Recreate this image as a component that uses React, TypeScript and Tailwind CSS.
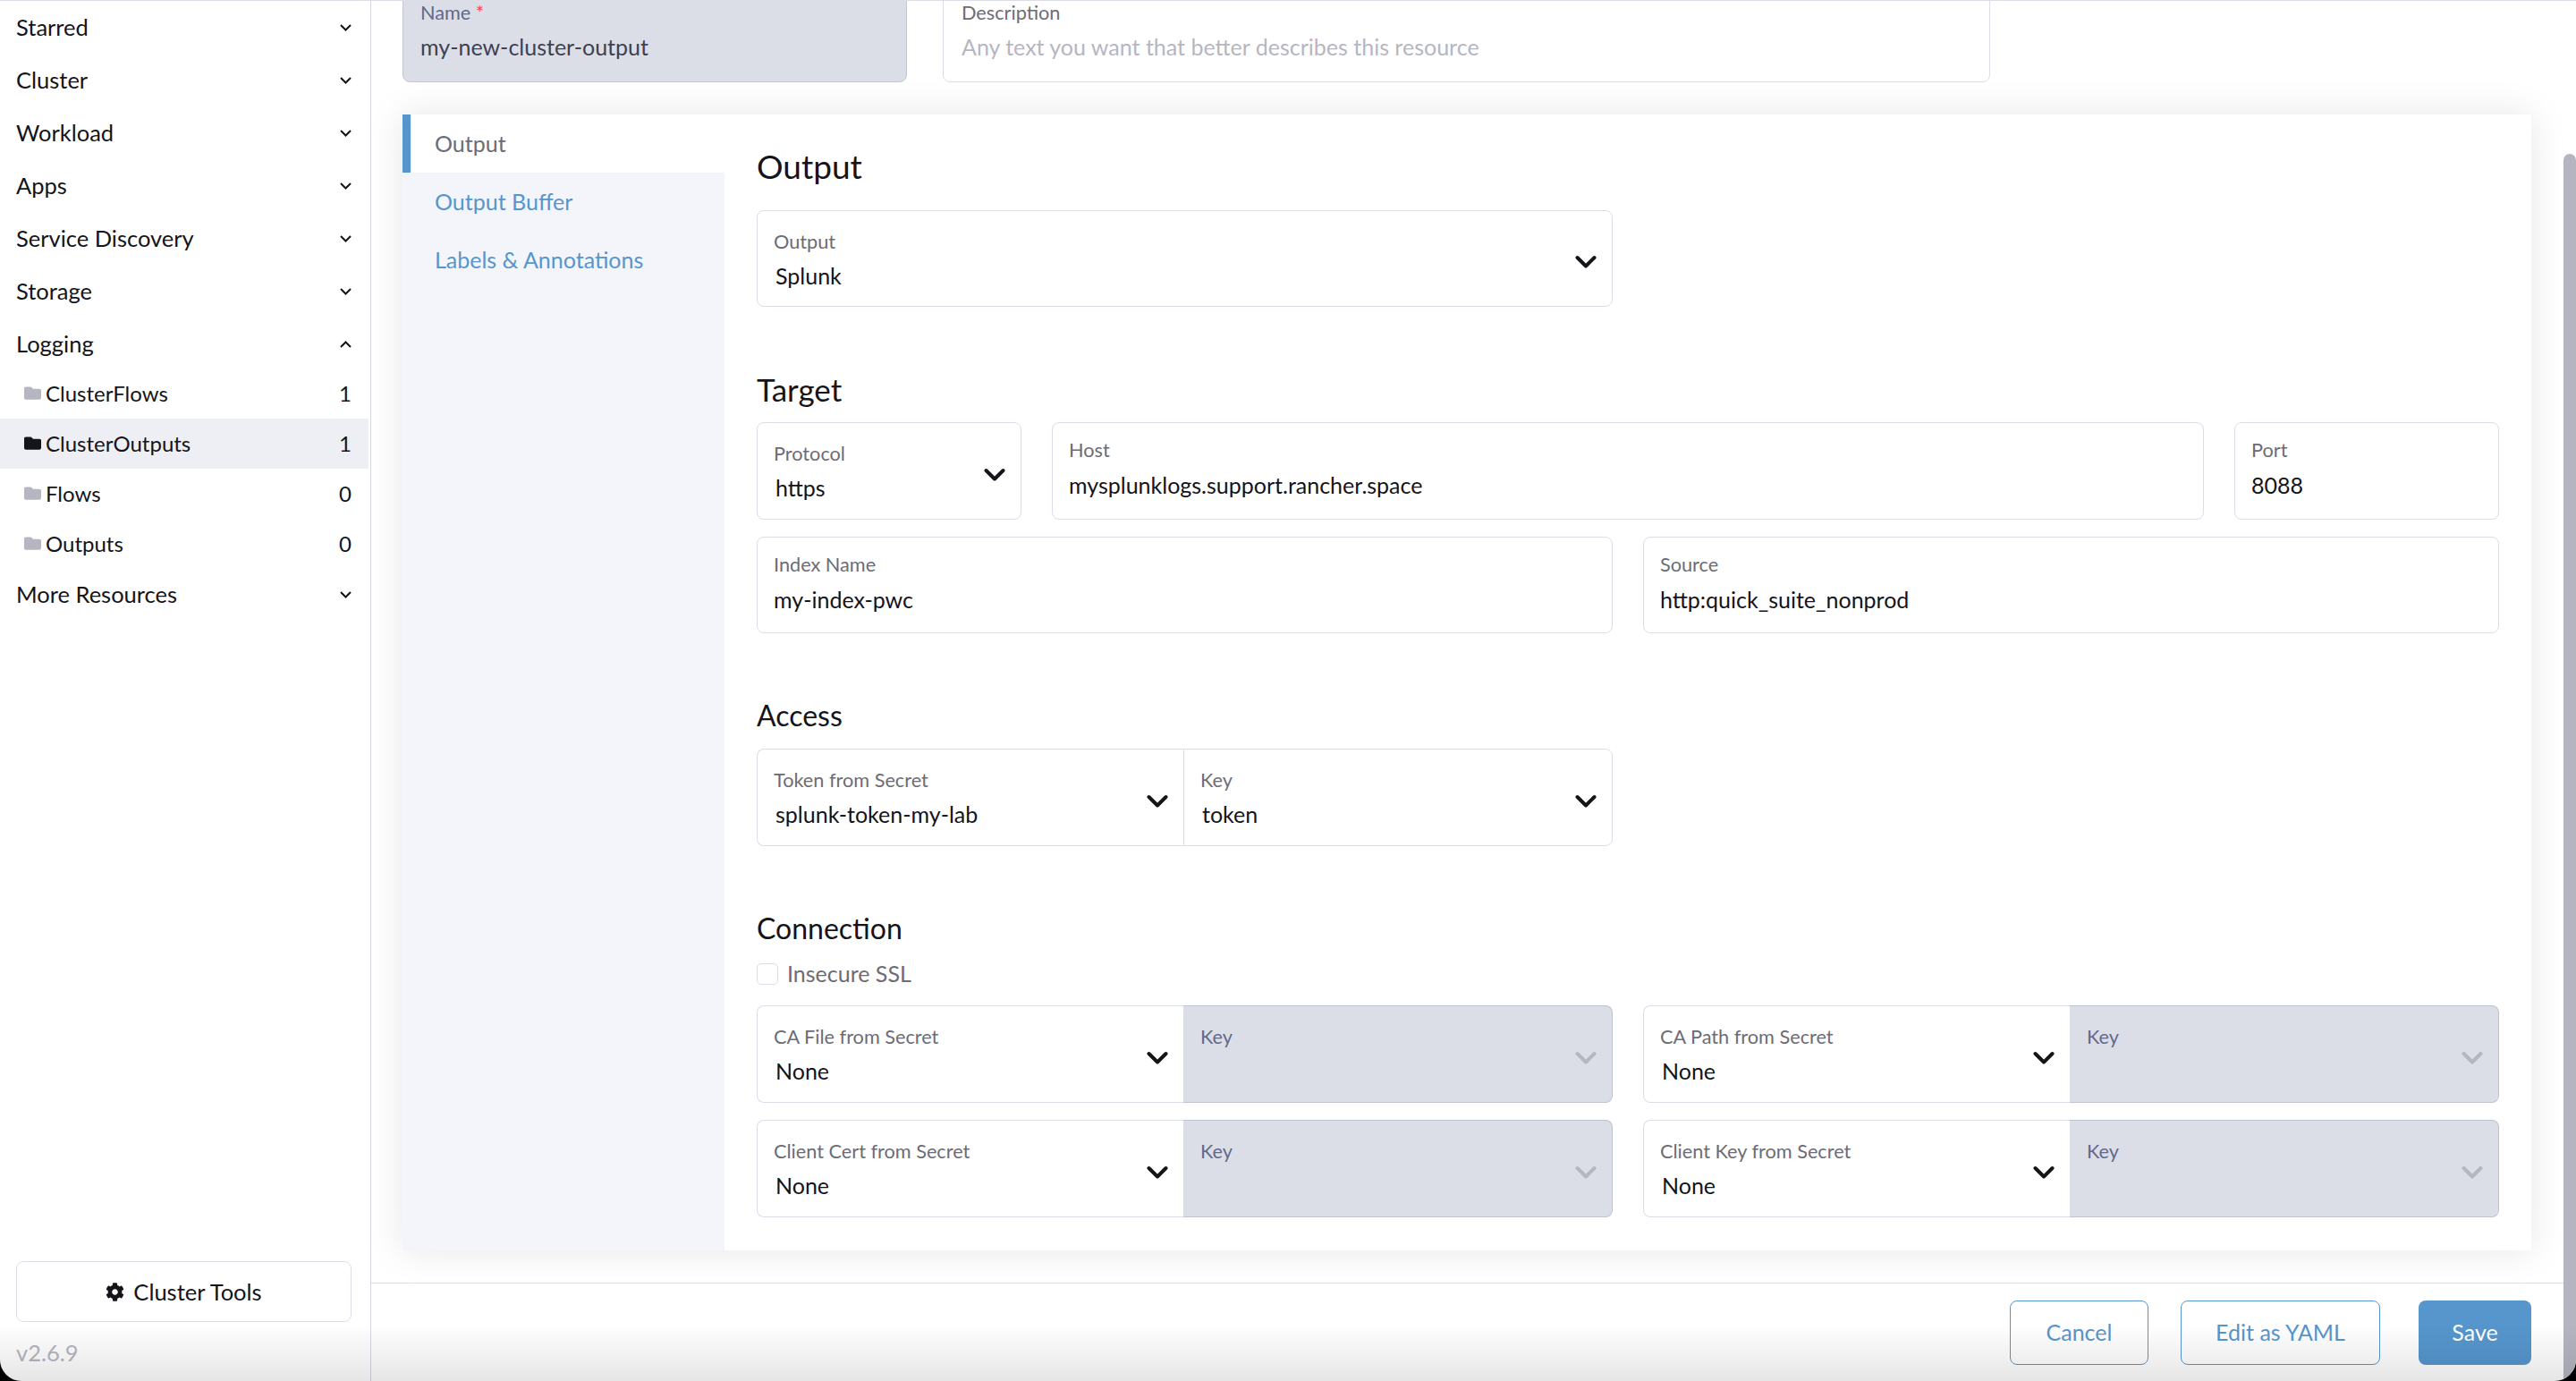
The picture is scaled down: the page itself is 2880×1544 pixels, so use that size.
import { FaCog, FaFolder } from 'react-icons/fa';

const navTop = ['Starred', 'Cluster', 'Workload', 'Apps', 'Service Discovery', 'Storage'];
const logging = [
  { name: 'ClusterFlows', count: 1 },
  { name: 'ClusterOutputs', count: 1, active: true },
  { name: 'Flows', count: 0 },
  { name: 'Outputs', count: 0 },
];

function SmallChevron({ up }: { up?: boolean }) {
  return (
    <svg width="13" height="8" viewBox="0 0 13 8" fill="none" stroke="#141419" strokeWidth="2" className={up ? 'rotate-180' : ''}>
      <path d="M1 1l5.5 5.5L12 1" />
    </svg>
  );
}

function SelectChevron({ disabled }: { disabled?: boolean }) {
  return (
    <svg width="24" height="15" viewBox="0 0 24 15" fill="none" stroke={disabled ? '#b6b6c2' : '#141419'} strokeWidth="4" strokeLinecap="round" strokeLinejoin="round" className="mt-[7px] shrink-0">
      <path d="M2.5 3L12 12.5 21.5 3" />
    </svg>
  );
}

function NavRow({ label, up }: { label: string; up?: boolean }) {
  return (
    <div className="flex h-[59px] items-center justify-between pb-[2px] pl-[18px] pr-[21px] text-[25.5px] text-[#141419]">
      <span>{label}</span>
      <SmallChevron up={up} />
    </div>
  );
}

function Sidebar() {
  return (
    <aside className="flex w-[415px] shrink-0 flex-col border-r border-[#d5d6de] pt-px">
      {navTop.map((label) => (
        <NavRow key={label} label={label} />
      ))}
      <NavRow label="Logging" up />
      <div className="-mt-[3px]">
        {logging.map((item) => (
          <div
            key={item.name}
            className={`mr-[2px] flex h-[56px] items-center justify-between pb-px pl-[27px] pr-[19px] text-[24px] text-[#141419] ${item.active ? 'bg-[#eeeff4]' : ''}`}
          >
            <span className="flex items-center gap-[5px]">
              <FaFolder size={19} color={item.active ? '#141419' : '#b6b6c2'} />
              {item.name}
            </span>
            <span>{item.count}</span>
          </div>
        ))}
      </div>
      <NavRow label="More Resources" />
      <div className="mt-auto pb-[16px] pl-[18px] pr-[21px]">
        <button className="flex h-[68px] w-full items-center justify-center gap-[10px] rounded-[8px] border border-[#dcdee7] text-[25.5px] text-[#141419]">
          <FaCog size={21} />
          Cluster Tools
        </button>
        <div className="mt-[18px] text-[25.5px] leading-[32px] text-[#b6b6c2]">v2.6.9</div>
      </div>
    </aside>
  );
}

function Label({ children, disabled }: { children: React.ReactNode; disabled?: boolean }) {
  return <div className={`text-[21.7px] leading-[30px] ${disabled ? 'text-[#64688a]' : 'text-[#6c6c76]'}`}>{children}</div>;
}

function InputField({ label, value, height = 'h-[109px]' }: { label: string; value: string; height?: string }) {
  return (
    <div className={`${height} rounded-[8px] border border-[#dcdee7] bg-white pl-[18px] pr-[20px] pt-[15px]`}>
      <Label>{label}</Label>
      <div className="mt-[8px] text-[25px] leading-[32px] text-[#141419]">{value}</div>
    </div>
  );
}

function SelectPart({ label, value, disabled, className }: { label: string; value?: string; disabled?: boolean; className: string }) {
  return (
    <div className={`flex items-center justify-between pr-[17px] ${className}`}>
      <div className="min-w-0">
        <Label disabled={disabled}>{label}</Label>
        <div className="mt-[7px] h-[32px] pl-[2px] text-[25px] leading-[32px] text-[#141419]">{value}</div>
      </div>
      <SelectChevron disabled={disabled} />
    </div>
  );
}

function SelectField({ label, value, height = 'h-[109px]' }: { label: string; value: string; height?: string }) {
  return (
    <SelectPart
      label={label}
      value={value}
      className={`${height} rounded-[8px] border border-[#dcdee7] bg-white pl-[18px]`}
    />
  );
}

function SecretPair({ label, value, keyValue }: { label: string; value: string; keyValue?: string }) {
  const disabled = !keyValue;
  return (
    <div className="grid grid-cols-[477px_1fr]">
      <SelectPart
        label={label}
        value={value}
        className="h-[109px] rounded-l-[8px] border border-r-0 border-[#dcdee7] bg-white pl-[18px]"
      />
      <SelectPart
        label="Key"
        value={keyValue}
        disabled={disabled}
        className={
          disabled
            ? 'h-[109px] rounded-r-[8px] border border-l-0 border-[#bfc2d0] bg-[#dcdee7] pl-[19px]'
            : 'h-[109px] rounded-r-[8px] border border-[#dcdee7] bg-white pl-[18px]'
        }
      />
    </div>
  );
}

function Heading({ children, className }: { children: React.ReactNode; className: string }) {
  return <h3 className={`leading-[44px] text-[#141419] ${className}`}>{children}</h3>;
}

function Panel() {
  return (
    <div className="mt-[36px] flex h-[1270px] bg-white shadow-[0_0_40px_rgba(20,20,40,0.1)]">
      <div className="w-[360px] shrink-0 bg-[#f4f5fa] text-[25px]">
        <div className="flex h-[65px] items-center border-l-[9px] border-[#5696cd] bg-white pl-[27px] text-[#6c6c76]">Output</div>
        <div className="flex h-[65px] items-center pl-[36px] text-[#5696cd]">Output Buffer</div>
        <div className="flex h-[65px] items-center pl-[36px] text-[#5696cd]">Labels &amp; Annotations</div>
      </div>
      <div className="min-w-0 flex-1 pl-[36px] pr-[36px] pt-[36px]">
        <Heading className="mb-[27px] text-[37px]">Output</Heading>
        <div className="grid grid-cols-2 gap-x-[34px]">
          <SelectField label="Output" value="Splunk" height="h-[108px]" />
        </div>

        <Heading className="mb-[15px] mt-[70px] text-[35px]">Target</Heading>
        <div className="grid grid-cols-[296px_1fr_296px] gap-x-[34px]">
          <SelectField label="Protocol" value="https" />
          <InputField label="Host" value="mysplunklogs.support.rancher.space" />
          <InputField label="Port" value="8088" />
        </div>
        <div className="mt-[19px] grid grid-cols-2 gap-x-[34px]">
          <InputField label="Index Name" value="my-index-pwc" height="h-[108px]" />
          <InputField label="Source" value="http:quick_suite_nonprod" height="h-[108px]" />
        </div>

        <Heading className="mb-[15px] mt-[70px] text-[32px]">Access</Heading>
        <div className="grid grid-cols-2 gap-x-[34px]">
          <SecretPair label="Token from Secret" value="splunk-token-my-lab" keyValue="token" />
        </div>

        <Heading className="mb-[17px] mt-[70px] text-[32px]">Connection</Heading>
        <label className="flex h-[24px] items-center gap-[10px] text-[25px] text-[#6c6c76]">
          <span className="h-[24px] w-[24px] rounded-[5px] border border-[#dcdee7] bg-white" />
          Insecure SSL
        </label>
        <div className="mt-[23px] grid grid-cols-2 gap-x-[34px] gap-y-[19px]">
          <SecretPair label="CA File from Secret" value="None" />
          <SecretPair label="CA Path from Secret" value="None" />
          <SecretPair label="Client Cert from Secret" value="None" />
          <SecretPair label="Client Key from Secret" value="None" />
        </div>
      </div>
    </div>
  );
}

export default function App() {
  return (
    <div className="h-[1544px] w-[2880px] overflow-hidden bg-black [font-family:Lato,sans-serif]">
      <div className="relative flex h-full overflow-hidden rounded-b-[24px] border-t border-[#dcdee7] bg-white">
        <Sidebar />
        <main className="flex min-w-0 flex-1 flex-col">
          <div className="min-h-0 flex-1 overflow-hidden pl-[35px] pr-[50px]">
            <div className="-mt-[17px] flex gap-[40px]">
              <div className="h-[108px] w-[564px] rounded-[8px] border border-[#c4c6d3] bg-[#dcdee7] pl-[19px] pt-[14px]">
                <Label disabled>
                  Name <span className="text-[#f64747]">*</span>
                </Label>
                <div className="mt-[7px] text-[25px] leading-[32px] text-[#3f4150]">my-new-cluster-output</div>
              </div>
              <div className="h-[108px] w-[1171px] rounded-[8px] border border-[#dcdee7] bg-white pl-[20px] pt-[14px]">
                <Label>Description</Label>
                <div className="mt-[7px] text-[25px] leading-[32px] text-[#b6b6c2]">Any text you want that better describes this resource</div>
              </div>
            </div>
            <Panel />
          </div>
          <footer className="flex h-[110px] shrink-0 items-start justify-end border-t border-[#dcdee7] pr-[50px] pt-[19px] text-[25px]">
            <button className="h-[72px] w-[155px] rounded-[8px] border border-[#5696cd] text-[#5696cd]">Cancel</button>
            <button className="ml-[36px] h-[72px] w-[223px] rounded-[8px] border border-[#5696cd] text-[#5696cd]">Edit as YAML</button>
            <button className="ml-[43px] h-[72px] w-[126px] rounded-[8px] bg-[#5696cd] text-white">Save</button>
          </footer>
        </main>
        <div className="absolute bottom-0 right-0 top-[171px] w-[14px] rounded-t-full bg-[#b4b5c0]" />
        <div className="pointer-events-none absolute inset-x-0 bottom-0 h-[64px] bg-linear-to-b from-transparent to-black/10" />
      </div>
    </div>
  );
}
